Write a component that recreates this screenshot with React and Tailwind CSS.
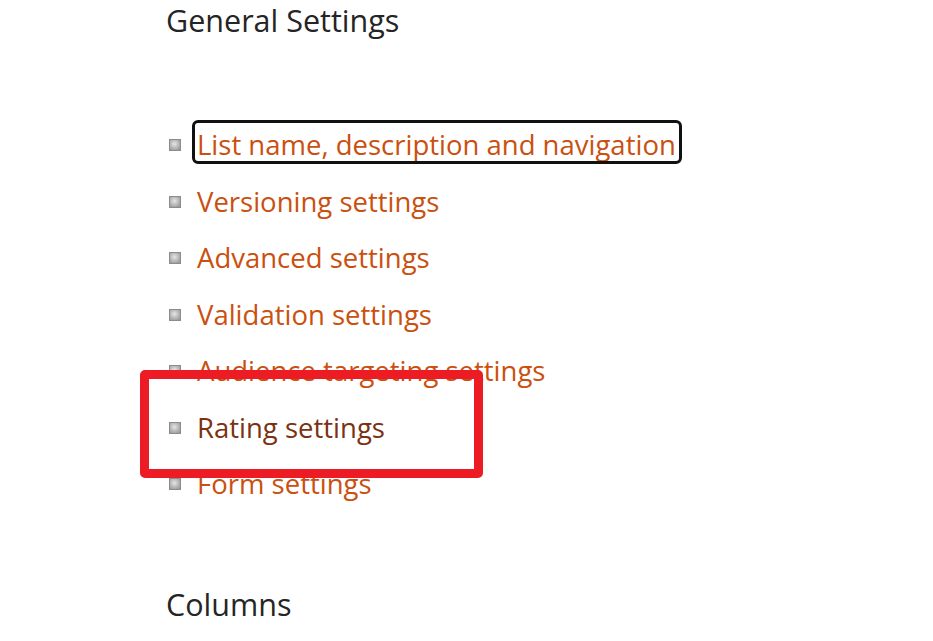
import React from 'react';

const ITEMS = [
  { id: 1, label: "List name, description and navigation", focused: true },
  { id: 2, label: "Versioning settings" },
  { id: 3, label: "Advanced settings" },
  { id: 4, label: "Validation settings" },
  { id: 5, label: "Audience targeting settings" },
  { id: 6, label: "Rating settings", active: true },
  { id: 7, label: "Form settings" },
];

const Bullet = () => (
  <span className="w-[12px] h-[12px] shrink-0 border border-[#8c8c8c] bg-[radial-gradient(circle_at_45%_40%,#e6e6e6_0%,#b5b5b5_55%,#8f8f8f_100%)]" />
);

const Settings = () => {
  return (
    <div className="relative min-h-screen bg-white font-['Open_Sans','Noto_Sans',sans-serif] pl-[166px]">
      <h2 className="h-[40px] flex items-center text-[30.5px] text-[#252525] leading-none">General Settings</h2>

      {/* Settings list */}
      <ul className="mt-[77px] flex flex-col">
        {ITEMS.map(item => (
          <li key={item.id} className="h-[56.5px] flex items-center pl-[3px]">
            <Bullet />
            <a
              href="#"
              className={
                "text-[27.5px] whitespace-nowrap " +
                (item.active ? "text-[#7a3212] " : "text-[#ca5010] ") +
                (item.focused
                  ? "relative -top-[3px] ml-[14px] pl-[2px] pr-[3px] pt-[6px] leading-[32px] outline-[3.5px] outline-solid outline-[#111] outline-offset-0 rounded-[3px]"
                  : "ml-[16px] leading-[34px]")
              }
            >
              {item.label}
            </a>
          </li>
        ))}
      </ul>

      <h2 className="mt-[72px] h-[40px] flex items-center text-[30.5px] text-[#252525] leading-none">Columns</h2>

      {/* Annotation box */}
      <div className="absolute left-[140px] top-[370px] w-[343px] h-[108px] border-[9px] border-[#ed1c24] rounded-[5px]" />
    </div>
  );
};

export default Settings;
